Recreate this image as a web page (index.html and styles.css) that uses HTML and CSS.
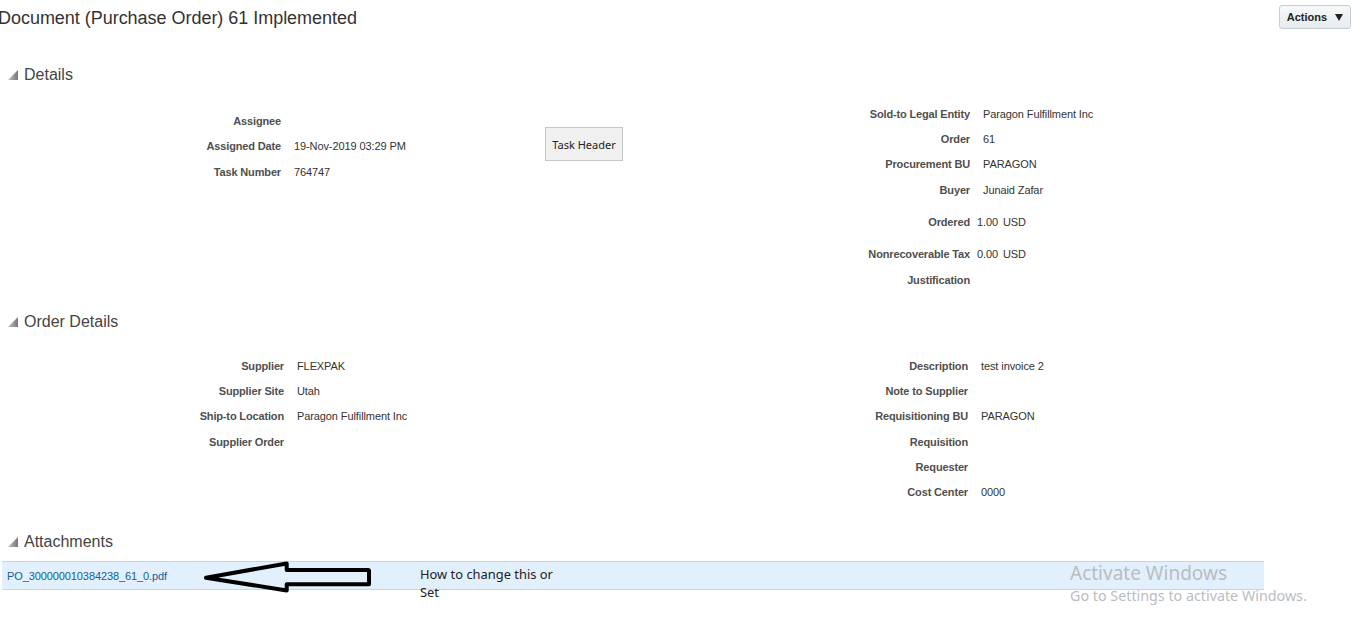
FILE: index.html
```html
<!DOCTYPE html>
<html lang="en">
  <head>
    <meta charset="UTF-8" />
    <title>Document (Purchase Order) 61 Implemented</title>
    <link rel="stylesheet" href="styles.css">
  </head>
  <body>
    <div class="title-bar">
      <h1>Document (Purchase Order) 61 Implemented</h1>
      <button class="actions">Actions <span class="caret"></span></button>
    </div>

    <div class="section-head details-head"><span class="disclosure"></span>Details</div>
    <div class="form details-form">
      <div class="col col-left">
        <div class="row"><span class="lbl">Assignee</span></div>
        <div class="row"><span class="lbl">Assigned Date</span><span class="val">19-Nov-2019 03:29 PM</span></div>
        <div class="row"><span class="lbl">Task Number</span><span class="val">764747</span></div>
      </div>
      <button class="task-header">Task Header</button>
      <div class="col col-right">
        <div class="row"><span class="lbl">Sold-to Legal Entity</span><span class="val">Paragon Fulfillment Inc</span></div>
        <div class="row"><span class="lbl">Order</span><span class="val">61</span></div>
        <div class="row"><span class="lbl">Procurement BU</span><span class="val">PARAGON</span></div>
        <div class="row tall"><span class="lbl">Buyer</span><span class="val">Junaid Zafar</span></div>
        <div class="row tall"><span class="lbl">Ordered</span><span class="val amount">1.00<span class="cur">USD</span></span></div>
        <div class="row wide"><span class="lbl">Nonrecoverable Tax</span><span class="val amount">0.00<span class="cur">USD</span></span></div>
        <div class="row"><span class="lbl">Justification</span></div>
      </div>
    </div>

    <div class="section-head order-head"><span class="disclosure"></span>Order Details</div>
    <div class="form order-form">
      <div class="col col-left2">
        <div class="row"><span class="lbl">Supplier</span><span class="val">FLEXPAK</span></div>
        <div class="row"><span class="lbl">Supplier Site</span><span class="val">Utah</span></div>
        <div class="row"><span class="lbl">Ship-to Location</span><span class="val">Paragon Fulfillment Inc</span></div>
        <div class="row"><span class="lbl">Supplier Order</span></div>
      </div>
      <div class="col col-right2">
        <div class="row"><span class="lbl">Description</span><span class="val">test invoice 2</span></div>
        <div class="row"><span class="lbl">Note to Supplier</span></div>
        <div class="row"><span class="lbl">Requisitioning BU</span><span class="val">PARAGON</span></div>
        <div class="row"><span class="lbl">Requisition</span></div>
        <div class="row"><span class="lbl">Requester</span></div>
        <div class="row"><span class="lbl">Cost Center</span><span class="val">0000</span></div>
      </div>
    </div>

    <div class="section-head attach-head"><span class="disclosure"></span>Attachments</div>
    <div class="attach-row">
      <a class="file" href="#">PO_300000010384238_61_0.pdf</a>
      <svg class="arrow" width="170" height="34" viewBox="0 0 170 34">
        <path d="M2 16.7 L82.7 2.5 L82.7 9 L164 9 Q165 9 165 10 L165 23.3 L82.7 23.3 L82.7 29.5 Z" fill="none" stroke="#000" stroke-width="4" stroke-linejoin="round"/>
      </svg>
      <div class="note">How to change this or Set</div>
    </div>

    <div class="activate">
      <div class="activate-big">Activate Windows</div>
      <div class="activate-small">Go to Settings to activate Windows.</div>
    </div>
  </body>
</html>
```

FILE: styles.css
```css
html, body {
  margin: 0;
  padding: 0;
  background: #fff;
}
body {
  width: 1363px;
  height: 621px;
  overflow: hidden;
  position: relative;
  font-family: "Liberation Sans", Arial, sans-serif;
  font-size: 11px;
  color: #333;
}

/* title */
.title-bar {
  display: flex;
  justify-content: space-between;
  height: 35px;
  padding-right: 12px;
}
h1 {
  margin: 7px 0 0 -2px;
  font-size: 18px;
  line-height: 22px;
  font-weight: normal;
  letter-spacing: -0.03px;
  color: #333;
}
.actions {
  margin-top: 5px;
  width: 72px;
  height: 24px;
  padding: 0;
  border: 1px solid #c4ced7;
  border-radius: 3px;
  background: linear-gradient(#f6f8f9, #e7ebee);
  font-family: "Liberation Sans", Arial, sans-serif;
  font-size: 11px;
  font-weight: bold;
  color: #222;
}
.caret {
  display: inline-block;
  margin-left: 5px;
  border-left: 4.5px solid transparent;
  border-right: 4.5px solid transparent;
  border-top: 7px solid #222;
}

/* section headers */
.section-head {
  display: flex;
  align-items: center;
  height: 22px;
  padding-left: 8px;
  font-size: 16px;
  color: #444;
}
.disclosure {
  width: 10px;
  height: 10px;
  margin-right: 6px;
  background: linear-gradient(to right, #c4c4c4, #767676);
  clip-path: polygon(100% 0, 100% 100%, 0 100%);
}
.details-head { margin-top: 29px; }
.order-head { margin-top: 19px; }
.attach-head { margin-top: 25px; }

/* forms */
.form {
  display: flex;
  align-items: flex-start;
}
.details-form {
  height: 190.25px;
  margin-top: 15.75px;
}
.order-form {
  height: 152.25px;
  margin-top: 20.75px;
}
.col {
  flex: none;
}
.row {
  display: flex;
  height: 25.3px;
  line-height: 25px;
}
.row.tall {
  height: 32px;
}
.row.wide {
  height: 26px;
}
.lbl {
  flex: none;
  text-align: right;
  font-weight: bold;
  letter-spacing: -0.15px;
  color: #4f4f4f;
}
.val {
  margin-left: 13px;
  letter-spacing: -0.1px;
  color: #333;
  white-space: nowrap;
}
.amount {
  margin-left: 7px;
}
.cur {
  margin-left: 5px;
}
.col-left {
  width: 294px;
  margin-top: 7.25px;
}
.col-left .lbl {
  width: 281px;
}
.task-header {
  flex: none;
  width: 78px;
  height: 34px;
  margin: 25.25px 0 0 251px;
  padding: 0;
  border: 1px solid #c8c8c8;
  background: #f0f0f0;
  font-family: "Noto Sans", sans-serif;
  font-size: 11px;
  color: #222;
}
.col-right .lbl {
  width: 347px;
}
.col-left2 .lbl {
  width: 284px;
}
.col-left2 {
  width: 0;
}
.col-right2 {
  margin-left: 683px;
}
.col-right2 .lbl {
  width: 285px;
}

/* attachments */
.attach-row {
  position: relative;
  display: flex;
  align-items: center;
  box-sizing: border-box;
  width: 1262px;
  height: 29px;
  margin: 8px 0 0 2px;
  padding-left: 5px;
  background: #e2f0fd;
  border-top: 1px solid #c6d5e0;
  border-bottom: 1px solid #c6d5e0;
}
.file {
  color: #145c9e;
  letter-spacing: -0.1px;
  text-decoration: none;
}
.arrow {
  position: absolute;
  left: 202px;
  top: -1px;
}
.note {
  position: absolute;
  left: 418px;
  top: 3px;
  width: 150px;
  font-family: "Noto Sans", sans-serif;
  font-size: 12.9px;
  line-height: 18px;
  color: #222;
}

/* watermark */
.activate {
  position: absolute;
  left: 1070px;
  top: 561px;
  font-family: "Noto Sans", sans-serif;
  color: #b9bdc2;
  white-space: nowrap;
}
.activate-big {
  font-size: 19px;
  line-height: 24px;
}
.activate-small {
  font-size: 14.3px;
  line-height: 21px;
}
```
